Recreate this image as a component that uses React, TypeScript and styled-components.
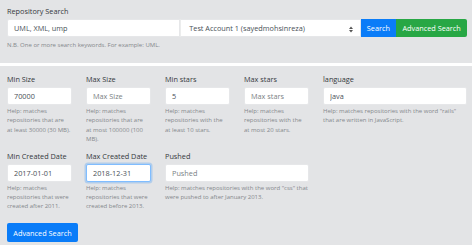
import React from "react";
import styled, { createGlobalStyle } from "styled-components";

const Global = createGlobalStyle`
  html, body { margin: 0; padding: 0; background: #fff; }
  body { font-family: "Open Sans", "Noto Sans", sans-serif; color: #2b2f33; }
  * { box-sizing: border-box; }
`;

const Page = styled.div`
  width: 474px;
  padding-right: 2px;
`;

const Panel = styled.section<{ $top?: boolean }>`
  background: #e3e4e6;
  padding: ${(p) => (p.$top ? "6px 5px 13px 7px" : "8px 5px 3px 7px")};
  margin-bottom: ${(p) => (p.$top ? "3px" : "0")};
`;

const Label = styled.label`
  display: block;
  font-size: 7.3px;
  line-height: 10px;
  margin-bottom: 3px;
  color: #34383c;
`;

const InputGroup = styled.div`
  display: flex;
  height: 18px;
`;

const TextInput = styled.input<{ $w?: number; $focus?: boolean; $grouped?: boolean }>`
  display: block;
  width: ${(p) => (p.$w ? `${p.$w}px` : "100%")};
  height: 18px;
  padding: 0 6px;
  font-family: inherit;
  font-size: 7.3px;
  color: #495057;
  background: #fff;
  border: 1px solid ${(p) => (p.$focus ? "#80bdff" : "#e6e7e9")};
  border-radius: ${(p) => (p.$grouped ? "2px 0 0 2px" : "2px")};
  box-shadow: ${(p) => (p.$focus ? "0 0 0 1.5px rgba(0,123,255,.22)" : "none")};
  outline: none;
  &::placeholder { color: #7a7f84; }
`;

const Select = styled.div`
  position: relative;
  width: 181px;
  height: 18px;
  display: flex;
  align-items: center;
  padding: 0 6px 0 8px;
  font-size: 7.3px;
  color: #495057;
  background: #fff;
  border: 1px solid #e6e7e9;
  border-left-color: #eceded;
`;

const Arrow = styled.svg`
  position: absolute;
  right: 7px;
  top: 6px;
`;

const Btn = styled.button<{ $color: string; $w: number; $last?: boolean; $round?: boolean }>`
  width: ${(p) => p.$w}px;
  height: ${(p) => (p.$round ? 19 : 18)}px;
  padding: 0;
  border: none;
  background: ${(p) => p.$color};
  color: #fff;
  font-family: inherit;
  font-size: 7.3px;
  border-radius: ${(p) => (p.$round ? "2px" : p.$last ? "0 2px 2px 0" : "0")};
  cursor: pointer;
`;

const Help = styled.small`
  display: block;
  font-size: 6px;
  line-height: 9.2px;
  color: #84888c;
  margin-top: 2px;
`;

const TopHelp = styled(Help)`
  margin-top: 4px;
`;

const Grid = styled.div`
  display: grid;
  grid-template-columns: repeat(6, 65px);
  column-gap: 14px;
`;

const Group = styled.div<{ $span?: number }>`
  grid-column: span ${(p) => p.$span ?? 1};
  margin-bottom: 7px;
`;

type Field = {
  label: string;
  value?: string;
  placeholder?: string;
  help: string;
  span?: number;
  focus?: boolean;
};

const fields: Field[] = [
  { label: "Min Size", value: "70000", help: "Help: matches repositories that are at\u00a0least 30000 (30 MB)." },
  { label: "Max Size", placeholder: "Max Size", help: "Help: matches repositories that are at\u00a0most 100000 (100 MB)." },
  { label: "Min stars", value: "5", help: "Help: matches repositories with the at\u00a0least 10 stars." },
  { label: "Max stars", placeholder: "Max stars", help: "Help: matches repositories with the at\u00a0most 20 stars." },
  { label: "language", value: "Java", span: 2, help: "Help: matches repositories with the word \"rails\" that are written in JavaScript." },
  { label: "Min Created Date", value: "2017-01-01", help: "Help: matches repositories that were created after 2011." },
  { label: "Max Created Date", value: "2018-12-31", focus: true, help: "Help: matches repositories that were created before 2013." },
  { label: "Pushed", placeholder: "Pushed", span: 2, help: "Help: matches repositories with the word \"css\" that were pushed to after January 2013." },
];

export default function App() {
  return (
    <Page>
      <Global />
      <Panel $top>
        <Label>Repository Search</Label>
        <InputGroup>
          <TextInput $w={174} $grouped defaultValue="UML, XML, ump" />
          <Select>
            Test Account 1 (sayedmohsinreza)
            <Arrow width="4" height="7" viewBox="0 0 4 7">
              <path d="M0 3 L2 0.5 L4 3 Z M0 4 L2 6.5 L4 4 Z" fill="#555" />
            </Arrow>
          </Select>
          <Btn $color="#0a7cf8" $w={36}>Search</Btn>
          <Btn $color="#28a745" $w={71} $last>Advanced Search</Btn>
        </InputGroup>
        <TopHelp>N.B. One or more search keywords. For example: UML.</TopHelp>
      </Panel>
      <Panel>
        <Grid>
          {fields.map((f) => (
            <Group key={f.label} $span={f.span}>
              <Label>{f.label}</Label>
              <TextInput defaultValue={f.value} placeholder={f.placeholder} $focus={f.focus} />
              <Help>{f.help}</Help>
            </Group>
          ))}
        </Grid>
        <Btn $color="#0a7cf8" $w={71} $round>Advanced Search</Btn>
      </Panel>
    </Page>
  );
}
